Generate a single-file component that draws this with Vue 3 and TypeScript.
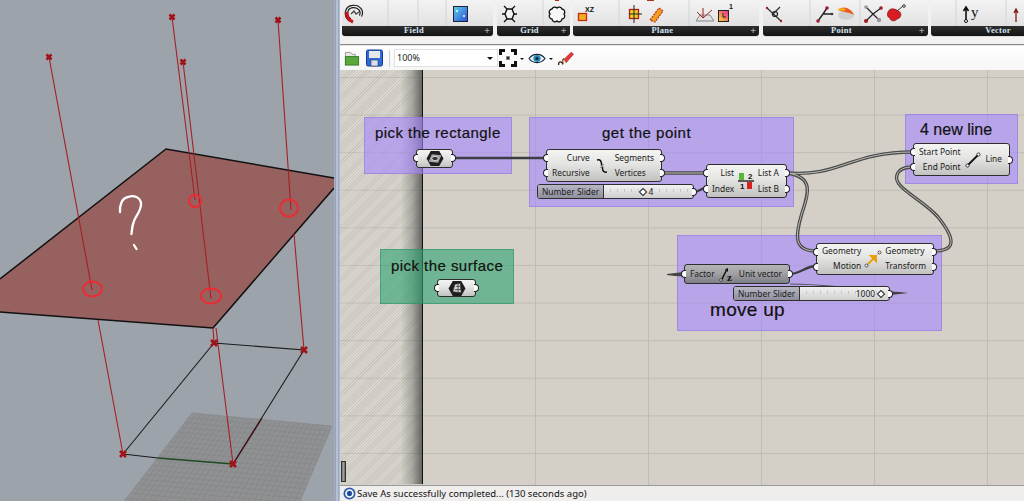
<script setup lang="ts">
// canvas positions below are page pixels, the canvas origin is at 340,69
const ox = 340
const oy = 69

const groups = [
  { title: 'pick the rectangle', x: 364, y: 116, w: 148, h: 57, px: 10, py: 6, size: 15, sp: 0.45, green: false },
  { title: 'get the point', x: 529, y: 116, w: 265, h: 90, px: 72, py: 6, size: 15, sp: 0.5, green: false },
  { title: '4 new line', x: 905, y: 113, w: 113, h: 70, px: 14, py: 5, size: 16, sp: 0, green: false },
  { title: 'move up', x: 677, y: 234, w: 265, h: 96, px: 32, py: 63, size: 19, sp: 0.3, green: false },
  { title: 'pick the surface', x: 380, y: 248, w: 134, h: 55, px: 10, py: 7, size: 15, sp: 0.45, green: true },
]

const nodes = [
  { id: 'explode', x: 546, y: 148, w: 116, h: 33, ins: ['Curve', 'Recursive'], outs: ['Segments', 'Vertices'], dark: false },
  { id: 'list', x: 706, y: 163, w: 81, h: 34, ins: ['List', 'Index'], outs: ['List A', 'List B'], dark: false },
  { id: 'line', x: 913, y: 142, w: 97, h: 33, ins: ['Start Point', 'End Point'], outs: ['Line'], dark: false },
  { id: 'move', x: 816, y: 242, w: 118, h: 32, ins: ['Geometry', 'Motion'], outs: ['Geometry', 'Transform'], dark: false },
  { id: 'unit', x: 684, y: 263, w: 106, h: 20, ins: ['Factor'], outs: ['Unit vector'], dark: true },
]

const params = [
  { id: 'rect', x: 416, y: 148, w: 37, h: 19 },
  { id: 'surf', x: 437, y: 278, w: 39, h: 18 },
]

const sliders = [
  { label: 'Number Slider', value: '4', x: 537, y: 183, w: 157, lw: 66, end: false },
  { label: 'Number Slider', value: '1000', x: 733, y: 285, w: 157, lw: 66, end: true },
]

const singleWires = [
  'M453 157 L546 157',
  'M694 191 C699 191 701 187 706 187',
  'M790 273 C800 273 806 265 816 265',
]
const doubleWires = [
  'M662 172 L706 172',
  'M787 172 C840 176 850 151 913 151',
  'M787 172 C815 176 808 194 802 212 C796 232 792 250 816 250',
  'M934 250 C958 250 954 236 938 216 C922 198 892 186 897 174 C899 168 905 166 913 166',
]

function portTop(count: number, idx: number, h: number) {
  return ((idx + 0.5) * h) / count - 4 + 'px'
}

// floor grid under the box, edges read off the reference
function lerp(a: number[], b: number[], t: number) {
  return [a[0] + (b[0] - a[0]) * t, a[1] + (b[1] - a[1]) * t]
}
const tl = [192, 413]
const tr = [332, 426]
const bl = [112, 517]
const br = [287, 532]
const floorLines: number[][] = []
for (let i = 0; i <= 30; i++) {
  const t = i / 30
  const a = lerp(tl, tr, t)
  const b = lerp(bl, br, t)
  floorLines.push([a[0], a[1], b[0], b[1]])
}
for (let i = 0; i <= 22; i++) {
  const t = i / 22
  const a = lerp(tl, bl, t)
  const b = lerp(tr, br, t)
  floorLines.push([a[0], a[1], b[0], b[1]])
}
const floorPoints = [tl, tr, br, bl].map((p) => p.join(',')).join(' ')

const topMarks = [[49, 57], [172, 17], [278, 20], [183, 62]]
const lowMarks = [[123, 454], [233, 464], [214, 343], [304, 350]]
</script>

<template>
  <div class="app">
    <div class="viewport">
      <svg width="334" height="501" viewBox="0 0 334 501">
        <polygon :points="floorPoints" fill="#8f9193" />
        <line
          v-for="(l, i) in floorLines"
          :key="i"
          :x1="l[0]" :y1="l[1]" :x2="l[2]" :y2="l[3]"
          stroke="#808284" stroke-width=".5"
        />
        <polygon points="166,149 334,178 334,188 213,328 0,312 0,279" fill="#96615f" />
        <path d="M0 279 L166 149 L334 178 M334 188 L213 328 L0 312" fill="none" stroke="#111" stroke-width="1.500" />

        <g stroke="#a52024" stroke-width="1.100" fill="none">
          <path d="M49 57 L92 290 M98 320 L123 454" />
          <path d="M172 17 L195 200 M213 328 L214 343" />
          <path d="M183 62 L211 299 M216 328 L233 464" />
          <path d="M278 20 L291 210 M294 234 L304 350" />
        </g>

        <g stroke="#1c1c1c" stroke-width="1.100" fill="none">
          <path d="M123 454 L214 343 L304 350 L233 464" />
          <path d="M123 454 L158 458" />
        </g>
        <path d="M158 458 L233 464" stroke="#1e4a1e" stroke-width="1.300" />
        <path d="M233 464 L262 418" stroke="#4a1216" stroke-width="1.300" />

        <g fill="none" stroke="#ef2a32" stroke-width="1.900">
          <ellipse cx="92.500" cy="289" rx="9.500" ry="7.500" />
          <circle cx="195" cy="201" r="6" />
          <ellipse cx="289" cy="208" rx="9" ry="8.500" />
          <ellipse cx="211" cy="296" rx="10" ry="7.500" />
        </g>

        <path d="M120 212 C119.500 205 122 198 128 197 C134 195 140 197 141 203 C142 210 136 215 134 221 C132 226 132 229 131.500 234" fill="none" stroke="#fff" stroke-width="2.300" stroke-linecap="round" stroke-linejoin="round" />
        <path d="M134 245 L136.500 249" stroke="#fff" stroke-width="2.300" stroke-linecap="round" />

        <g stroke="#a01218" stroke-width="2.600">
          <path v-for="(m, i) in topMarks" :key="i" :d="`M${m[0] - 2.5} ${m[1] - 2.5} l5 5 m0 -5 l-5 5`" />
          <path v-for="(m, i) in lowMarks" :key="'l' + i" :d="`M${m[0] - 3} ${m[1] - 3} l6 6 m0 -6 l-6 6`" />
        </g>
      </svg>
    </div>
    <div class="divider"></div>

    <div class="editor">
      <div class="ribbon">
        <div class="rgroup field">
          <svg class="ricons" width="151" height="26">
            <path d="M46 0V26M76 0V26M104 0V26" stroke="#d4d4d4" />
            <path d="M8 20 C2 15 4 7 11 6.500 C17 6 21 11 18.500 16" fill="none" stroke="#1a1a1a" stroke-width="3.600" />
            <path d="M8 20 C2 15 4 7 11 6.500 C17 6 21 11 18.500 16" fill="none" stroke="#f2f2f2" stroke-width="1.200" />
            <path d="M5 12 C4 16 6 20 11 22" fill="none" stroke="#c8141c" stroke-width="3.400" />
            <path d="M9 14 l3 -3 l2 3 l3 -2" fill="none" stroke="#444" stroke-width="1.300" />
            <rect x="111.500" y="6.500" width="14" height="15" fill="url(#blue)" stroke="#223" />
            <circle cx="115" cy="11" r="1" fill="#fff" /><circle cx="122" cy="16" r="1" fill="#fff" />
            <defs>
              <linearGradient id="blue" x1="0" y1="0" x2="1" y2="1"><stop offset="0" stop-color="#5fd0e8" /><stop offset="1" stop-color="#2a50d8" /></linearGradient>
              <linearGradient id="mag" x1="0" y1="1" x2="1" y2="0"><stop offset="0" stop-color="#f8e020" /><stop offset="1" stop-color="#e820a0" /></linearGradient>
            </defs>
          </svg>
          <div class="rlabel">Field<span class="plus">+</span></div>
        </div>
        <div class="rgroup grid">
          <svg class="ricons" width="73" height="26">
            <path d="M46 0V26" stroke="#d4d4d4" />
            <path d="M58 0h4" stroke="#b03020" stroke-width="2" />
            <polygon points="8,14 10,9 15,9 17,14 15,19 10,19" fill="#f2f2f2" stroke="#111" stroke-width="1.400" />
            <path d="M10 9 L7 6 M15 9 L18 6 M10 19 L7 22 M15 19 L18 22 M8 14 H5 M17 14 H20" stroke="#111" stroke-width="1.300" />
            <path d="M55 9 a3 3 0 0 1 5 -1 a3 3 0 0 1 5 1 a3 3 0 0 1 2 5 a3 3 0 0 1 -2 5 a3 3 0 0 1 -5 2 a3 3 0 0 1 -5 -2 a3 3 0 0 1 -2 -5 a3 3 0 0 1 2 -5Z" fill="#f6f6f6" stroke="#111" stroke-width="1.300" />
          </svg>
          <div class="rlabel">Grid<span class="plus">+</span></div>
        </div>
        <div class="rgroup plane">
          <svg class="ricons" width="186" height="26">
            <path d="M46 0V26M116 0V26" stroke="#d4d4d4" />
            <path d="M74 0h7" stroke="#b03020" stroke-width="2" />
            <rect x="5.500" y="13.500" width="8" height="7" fill="#f0b020" stroke="#c82818" stroke-width="1.300" />
            <text x="12" y="12" class="xz">XZ</text>
            <rect x="56.500" y="9.500" width="9" height="9" fill="#f0d020" stroke="#b02020" stroke-width="1.300" />
            <path d="M61 5V23M56 14H69" stroke="#222" stroke-width="1" />
            <path d="M77 20 L86 8 L90 11 L82 22Z" fill="#f0a020" stroke="#c03018" stroke-width="1.200" stroke-dasharray="2 1" />
            <path d="M123 21 L127 15 H137 L141 21Z" fill="#e2e2e2" stroke="#888" />
            <path d="M130 18 V8 M130 18 L139 10 M130 18 L124 12" stroke="#a02020" stroke-width="1" />
            <rect x="145.500" y="10.500" width="10" height="11" fill="url(#mag)" stroke="#222" />
            <path d="M150 13v4h3" stroke="#222" fill="none" />
            <text x="156" y="9" class="xz">1</text>
          </svg>
          <div class="rlabel">Plane<span class="plus">+</span></div>
        </div>
        <div class="rgroup point">
          <svg class="ricons" width="165" height="26">
            <path d="M47 0V26M97 0V26" stroke="#d4d4d4" />
            <path d="M4 8 L18 21 M17 7 L9 15" stroke="#333" stroke-width="1.300" />
            <circle cx="12" cy="14" r="2.500" fill="none" stroke="#222" stroke-width="1.200" />
            <circle cx="4" cy="8" r="1.200" fill="#a02020" /><circle cx="18" cy="21" r="1.200" fill="#a02020" />
            <path d="M60 14 L55 21 M60 14 L64 8 M60 14 L68 14" stroke="#222" stroke-width="1.400" />
            <circle cx="64" cy="8" r="1.800" fill="#a02030" /><circle cx="55" cy="21" r="1.800" fill="#a02030" /><circle cx="69" cy="14" r="1.300" fill="#333" />
            <ellipse cx="83" cy="15" rx="8" ry="5" fill="#d0d0d0" />
            <path d="M75 10 C80 5 88 8 91 15 C86 12 80 12 75 10Z" fill="#ee5a20" />
            <path d="M75 10 C78 9 80 9 82 10" stroke="#f0c020" stroke-width="2" fill="none" />
            <path d="M110 14 L103 7 M110 14 L118 8 M110 14 L103 21 M110 14 L116 20" stroke="#222" stroke-width="1.200" />
            <circle cx="103" cy="7" r="1.800" fill="#999" /><circle cx="118" cy="8" r="1.800" fill="#a01820" /><circle cx="103" cy="21" r="2" fill="#a01820" /><circle cx="116" cy="20" r="2.200" fill="#999" />
            <path d="M125 12 C127 7 133 9 135 11 C139 12 139 18 134 19 C132 22 127 21 127 18 C124 17 124 14 125 12Z" fill="#d81c24" stroke="#801010" stroke-width=".7" />
            <path d="M134 11 L140 6" stroke="#333" /><circle cx="141" cy="6" r="1.300" fill="#fff" stroke="#333" />
          </svg>
          <div class="rlabel">Point<span class="plus">+</span></div>
        </div>
        <div class="rgroup vector">
          <svg class="ricons" width="92" height="26">
            <path d="M25 0V26M75 0V26" stroke="#d4d4d4" />
            <path d="M35 21 V8 M32.500 11 L35 7 L37.500 11" fill="none" stroke="#111" stroke-width="1.600" />
            <circle cx="35" cy="21" r="1.500" fill="#fff" stroke="#111" />
            <text x="40" y="17" class="vy">y</text>
            <path d="M85 22 V10 M83 13 L85 9 L87 13" fill="none" stroke="#801818" stroke-width="1.300" />
          </svg>
          <div class="rlabel">Vector</div>
        </div>
      </div>
      <div class="ribbon-foot"></div>

      <div class="toolbar">
        <svg width="16" height="18" class="ti" viewBox="0 0 17 18">
          <path d="M1.500 16.500 V3 H7 L8.500 5 H12 V7" fill="#e8e8e0" stroke="#999" />
          <rect x="1.500" y="7.500" width="14" height="9" fill="#5aa83c" stroke="#3a7a28" />
        </svg>
        <svg width="17" height="18" class="ti" viewBox="0 0 17 18">
          <rect x=".5" y="1" width="16" height="16" rx="1.500" fill="#2c6cd8" stroke="#123a90" />
          <rect x="3" y="2" width="11" height="7" fill="#e8e8e8" />
          <rect x="5" y="11" width="7" height="6" fill="#dde" stroke="#345" stroke-width=".6" />
        </svg>
        <span class="sep"></span>
        <div class="combo">100%<span class="caret"></span></div>
        <svg width="18" height="18" viewBox="0 0 18 18" class="ti2">
          <path d="M1.500 6 V1.500 H6 M12 1.500 H16.500 V6 M16.500 12 V16.500 H12 M6 16.500 H1.500 V12" fill="none" stroke="#111" stroke-width="3" />
          <path d="M7.500 7.500 L10.500 10.500 M10.500 7.500 L7.500 10.500" stroke="#222" stroke-width="1.500" />
        </svg>
        <span class="caret small"></span>
        <svg width="18" height="13" viewBox="0 0 18 12" class="ti2">
          <path d="M1 6 C5 .5 13 .5 17 6 C13 11.500 5 11.500 1 6Z" fill="#dff0f8" stroke="#123" stroke-width="1.100" />
          <circle cx="9" cy="6" r="3.600" fill="#2a88b8" /><circle cx="9" cy="6" r="1.500" fill="#0a2030" />
        </svg>
        <span class="caret small"></span>
        <svg width="18" height="17" viewBox="0 0 16 16">
          <path d="M1 14 C1 10 4 11 5 13 C6 11 4 9 6 8" fill="none" stroke="#402010" stroke-width="1.200" />
          <path d="M6 9 L13 2 L15 4 L8 12Z" fill="#e83838" stroke="#901818" stroke-width=".6" />
          <path d="M6 9 L8 12 L5 12Z" fill="#f0d8b0" />
        </svg>
      </div>

      <div class="canvas">
        <div class="shade"></div>
        <div
          v-for="g in groups"
          :key="g.title"
          class="group"
          :class="{ green: g.green }"
          :style="{ left: g.x - ox + 'px', top: g.y - oy + 'px', width: g.w + 'px', height: g.h + 'px', padding: g.py + 'px 0 0 ' + g.px + 'px', fontSize: g.size + 'px', letterSpacing: g.sp + 'px' }"
        >{{ g.title }}</div>

        <svg class="wires" width="684" height="418" viewBox="340 69 684 418">
          <polygon points="667,273 675,272 684,271 684,275.500 675,275 667,274" fill="#444" />
          <polygon points="890,290.500 900,291 908,292 900,293 890,294" fill="#444" />
          <path d="M790 283 C805 283 820 284 836 285.500" fill="none" stroke="#555" stroke-width="1.200" />
          <path v-for="d in doubleWires" :key="d" :d="d" fill="none" stroke="#4a4a4a" stroke-width="3.400" />
          <path v-for="d in doubleWires" :key="'i' + d" :d="d" fill="none" stroke="#bdbdb8" stroke-width="1" />
          <path v-for="d in singleWires" :key="d" :d="d" fill="none" stroke="#3c3c44" stroke-width="2.400" />
        </svg>

        <div
          v-for="n in nodes"
          :key="n.id"
          class="node"
          :class="{ dark: n.dark }"
          :style="{ left: n.x - ox + 'px', top: n.y - oy + 'px', width: n.w + 'px', height: n.h + 'px' }"
        >
          <i v-for="(_, i) in n.ins" :key="'a' + i" class="port in" :style="{ top: portTop(n.ins.length, i, n.h - 2) }"></i>
          <i v-for="(_, i) in n.outs" :key="'b' + i" class="port out" :style="{ top: portTop(n.outs.length, i, n.h - 2) }"></i>
          <div class="col ins"><span v-for="t in n.ins" :key="t">{{ t }}</span></div>
          <div class="nicon">
            <svg v-if="n.id === 'explode'" width="14" height="16" viewBox="0 0 14 16">
              <path d="M2 2 C7 1 6 5 7 8 C8 11 7 15 12 14" fill="none" stroke="#111" stroke-width="1.500" />
              <path d="M5 7 L9 9 M5 10 L9 6" stroke="#999" />
            </svg>
            <svg v-else-if="n.id === 'list'" width="16" height="20" viewBox="0 0 16 20">
              <rect x="1" y="2" width="5" height="7" fill="#58b838" />
              <rect x="9" y="11" width="5" height="7" fill="#d82020" />
              <path d="M0 10H16" stroke="#111" stroke-width="1.300" />
              <text x="10" y="8" class="nn">2</text>
              <text x="2" y="18" class="nn">1</text>
            </svg>
            <svg v-else-if="n.id === 'line'" width="16" height="16" viewBox="0 0 16 16">
              <path d="M2.500 13.500 L13.500 2.500" stroke="#111" stroke-width="1.800" />
              <circle cx="2.500" cy="13.500" r="1.600" fill="#fff" stroke="#111" stroke-width=".8" />
              <circle cx="13.500" cy="2.500" r="1.600" fill="#fff" stroke="#111" stroke-width=".8" />
            </svg>
            <svg v-else-if="n.id === 'move'" width="18" height="18" viewBox="0 0 18 18">
              <path d="M3 15 L15 3" stroke="#777" stroke-dasharray="2 1" />
              <path d="M4 14 L10 8 M7 6 H12 V11Z" stroke="#e8a010" stroke-width="2" fill="#e8a010" />
              <circle cx="2.500" cy="15.500" r="1.500" fill="#eee" stroke="#333" stroke-width=".8" />
              <circle cx="15.500" cy="2.500" r="1.500" fill="#eee" stroke="#333" stroke-width=".8" />
            </svg>
            <svg v-else width="16" height="15" viewBox="0 0 16 15">
              <path d="M2 14 L8 2" stroke="#111" stroke-width="1.500" />
              <path d="M6 2.500 L9 1 L9 5Z" fill="#111" />
              <circle cx="2" cy="13" r="1.300" fill="#fff" stroke="#111" stroke-width=".7" />
              <text x="8" y="14" class="zz">z</text>
            </svg>
          </div>
          <div class="col outs"><span v-for="t in n.outs" :key="t">{{ t }}</span></div>
        </div>

        <div
          v-for="p in params"
          :key="p.id"
          class="node param"
          :style="{ left: p.x - ox + 'px', top: p.y - oy + 'px', width: p.w + 'px', height: p.h + 'px' }"
        >
          <i class="port in" style="top: 4px"></i>
          <i class="port out" style="top: 4px"></i>
          <svg width="20" height="17" viewBox="0 0 18 16">
            <polygon points="1,8 5,1 13,1 17,8 13,15 5,15" fill="#1e1e20" />
            <template v-if="p.id === 'rect'">
              <polygon points="3,11 6,4 15,5 12,12" fill="#a4a4a4" />
              <ellipse cx="9" cy="8" rx="3" ry="2" fill="#333" stroke="#e4e4e4" stroke-width=".8" />
            </template>
            <path v-else d="M5 11 L7 4 L12 3 L13 12Z M8 6 H12 M7 9 H13 M10 3 V12" fill="#d4d4d4" stroke="#333" stroke-width=".7" />
          </svg>
        </div>

        <div
          v-for="s in sliders"
          :key="s.value"
          class="slider"
          :style="{ left: s.x - ox + 'px', top: s.y - oy + 'px', width: s.w + 'px' }"
        >
          <i class="port out" style="top: 3px"></i>
          <div class="slabel" :style="{ width: s.lw + 'px' }">{{ s.label }}</div>
          <div class="strack" :class="{ end: s.end }">
            <template v-if="s.end">{{ s.value }}<b class="grip"></b></template>
            <template v-else><b class="grip"></b>{{ s.value }}</template>
          </div>
        </div>

        <div class="hscroll"></div>
      </div>

      <div class="status">
        <svg width="13" height="13" viewBox="0 0 13 13">
          <circle cx="6.500" cy="6.500" r="6" fill="#2a5ca8" />
          <circle cx="6.500" cy="6.500" r="3.500" fill="none" stroke="#fff" stroke-width="1.600" />
          <path d="M6.500 4 V9" stroke="#1a3a80" stroke-width="1.400" />
        </svg>
        <span>Save As successfully completed... (130 seconds ago)</span>
      </div>
    </div>
  </div>
</template>

<style scoped>
.app {
  display: flex;
  width: 1024px;
  height: 501px;
  overflow: hidden;
  font-family: "Noto Sans", sans-serif;
}
.viewport {
  width: 334px;
  background: #9da3ab;
}
.viewport svg { display: block; }
.divider {
  width: 6px;
  background: linear-gradient(90deg, #a9b4c4 0, #8d9db4 33%, #dfe4ea 50%, #8fa2bd 66%, #b4c2d6 100%);
}
.editor {
  flex: 1;
  min-width: 0;
  display: flex;
  flex-direction: column;
  background: #f2f1f0;
  overflow: hidden;
}

.ribbon {
  display: flex;
  gap: 3.500px;
  height: 37px;
  padding-left: 2px;
  flex: none;
}
.rgroup {
  display: flex;
  flex-direction: column;
  flex: none;
  background: linear-gradient(#f3f3f3, #dedede 85%);
  border-radius: 0 0 3px 3px;
}
.field { width: 151px; }
.grid { width: 73px; }
.plane { width: 186px; }
.point { width: 165px; }
.vector { width: 134px; }
.ricons { display: block; height: 26px; }
.rlabel {
  position: relative;
  height: 10px;
  box-sizing: border-box;
  padding-right: 7px;
  background: linear-gradient(#2e2e2e, #141414);
  border-radius: 0 0 3px 3px;
  color: #d6e4f2;
  font: bold 8.500px/9px "Liberation Serif", serif;
  letter-spacing: .3px;
  text-align: center;
}
.vector .rlabel { padding-right: 0; }
.plus {
  position: absolute;
  right: 3px;
  top: 0;
  color: #9a9a9a;
  font: bold 9px/10px "Liberation Sans", sans-serif;
}
.xz { font: bold 7px "Liberation Sans", sans-serif; fill: #111; }
.vy { font: 15px "Liberation Serif", serif; fill: #111; }
.ribbon-foot {
  height: 7px;
  flex: none;
  border-bottom: 1px solid #8a8a8a;
}

.toolbar {
  display: flex;
  align-items: center;
  height: 24px;
  flex: none;
  padding-left: 4px;
  background: linear-gradient(#fff, #f6f6f6);
  border-top: 1px solid #e4e4e4;
}
.ti { margin-right: 6px; }
.sep {
  width: 1px;
  height: 17px;
  margin: 0 4px 0 0;
  background: #cfcfcf;
}
.combo {
  position: relative;
  width: 104px;
  height: 18px;
  margin-right: 1px;
  padding-left: 2px;
  box-sizing: border-box;
  background: #fff;
  border: 1px solid #e0e0e0;
  font: 9px/16px "Noto Sans", sans-serif;
  color: #222;
}
.caret {
  position: absolute;
  right: 4px;
  top: 7px;
  border: 3px solid transparent;
  border-top: 3px solid #111;
}
.caret.small {
  position: static;
  margin: 3px 4px 0 3px;
  border-width: 2.500px;
  border-top-color: #111;
}
.ti2 { flex: none; }

.canvas {
  position: relative;
  flex: 1;
  min-height: 0;
  overflow: hidden;
  background-color: #d4d0c8;
  background-image:
    linear-gradient(#bfbcb4 1px, transparent 1px),
    linear-gradient(90deg, #bfbcb4 1px, transparent 1px);
  background-size: 100% 37.600px, 113px 100%;
  background-position: 0 7px, 82px 0;
}
.shade {
  position: absolute;
  left: 0;
  top: 0;
  bottom: 1px;
  width: 82px;
  border-right: 1.500px solid #111;
  background:
    linear-gradient(90deg, rgba(70, 70, 70, 0) 74%, rgba(70, 70, 70, .3) 88%, rgba(60, 60, 60, .72) 100%),
    repeating-linear-gradient(135deg, rgba(255, 255, 255, .14) 0 1px, rgba(150, 146, 138, .14) 1px 2px);
}
.group {
  position: absolute;
  box-sizing: border-box;
  background: rgba(165, 135, 253, .6);
  border: 1px solid rgba(140, 110, 220, .5);
  color: #111;
  font-family: "Liberation Sans", sans-serif;
  line-height: 1.200;
  -webkit-text-stroke: .2px #111;
  white-space: nowrap;
}
.group.green {
  background: rgba(43, 163, 112, .6);
  border-color: rgba(40, 140, 100, .5);
}
.wires {
  position: absolute;
  left: 0;
  top: 0;
}
.node {
  position: absolute;
  box-sizing: border-box;
  display: flex;
  justify-content: space-between;
  align-items: stretch;
  background: linear-gradient(#f4f4f2, #e4e4e2 45%, #c2c2c0);
  border: 1px solid #2e2e2e;
  border-radius: 3px;
  font: 8.400px "Noto Sans", sans-serif;
  color: #1a1a1a;
}
.node.dark {
  background: linear-gradient(#b4b4b8, #a2a2a6 45%, #7e7e86);
}
.node.param {
  align-items: center;
  justify-content: center;
}
.col {
  display: flex;
  flex-direction: column;
  justify-content: space-around;
  line-height: 1;
  white-space: nowrap;
}
.ins { align-items: flex-end; padding-left: 5px; }
.outs { align-items: flex-start; padding-right: 7px; }
.nicon {
  display: flex;
  align-items: center;
  justify-content: center;
  flex: 1;
}
.nn { font: bold 8px "Liberation Sans", sans-serif; fill: #111; }
.zz { font: bold 11px "Liberation Serif", serif; fill: #111; }
.port {
  position: absolute;
  box-sizing: border-box;
  width: 5px;
  height: 8px;
  background: #fff;
  border: 1.200px solid #222;
}
.port.in {
  left: -4px;
  border-radius: 4px 0 0 4px;
  border-right: 0;
}
.port.out {
  right: -4px;
  border-radius: 0 4px 4px 0;
  border-left: 0;
}
.slider {
  position: absolute;
  box-sizing: border-box;
  display: flex;
  height: 15px;
  border: 1px solid #2e2e2e;
  border-radius: 3px;
  background: linear-gradient(#f2f2f2, #cfcfcf);
  font: 8.400px/13px "Noto Sans", sans-serif;
  color: #1a1a1a;
}
.slabel {
  flex: none;
  box-sizing: border-box;
  padding-left: 4px;
  background: linear-gradient(#b8b8c4, #8e8e9c);
  border-right: 1px solid #333;
  border-radius: 2px 0 0 2px;
  white-space: nowrap;
}
.strack {
  flex: 1;
  display: flex;
  align-items: center;
  justify-content: center;
  gap: 3px;
  padding-right: 4px;
  background-image: repeating-linear-gradient(90deg, #c4c4c4 0 1px, transparent 1px 7px);
  background-size: 78px 3px;
  background-position: 6px 4px;
  background-repeat: no-repeat;
}
.strack.end {
  justify-content: flex-end;
  padding-right: 5px;
}
.grip {
  width: 4px;
  height: 4px;
  background: #fff;
  border: 1px solid #222;
  transform: rotate(45deg);
}
.hscroll {
  position: absolute;
  left: 1px;
  bottom: 3px;
  width: 5px;
  height: 21px;
  background: linear-gradient(90deg, #666, #aaa 40%, #666);
  border: 1px solid #333;
  box-sizing: border-box;
}

.status {
  display: flex;
  align-items: center;
  gap: 1px;
  height: 15px;
  flex: none;
  padding-left: 3px;
  background: #f0eded;
  border-top: 1px solid #9a9a9a;
  font: 9.500px "Noto Sans", sans-serif;
  color: #111;
  white-space: nowrap;
}
</style>
